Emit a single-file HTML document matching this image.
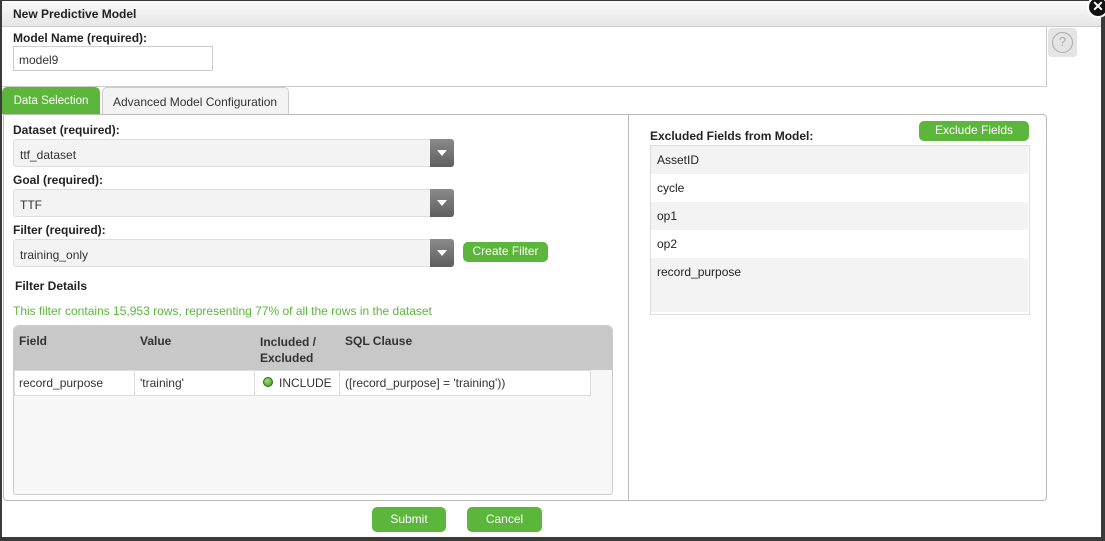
<!DOCTYPE html>
<html><head><style>
*{box-sizing:border-box;margin:0;padding:0}
body{width:1105px;height:541px;background:#3a3a3a;font-family:"Liberation Sans",sans-serif;font-size:12px;color:#333;position:relative;overflow:hidden}
.a{position:absolute;white-space:nowrap}
.lbl{font-weight:bold;font-size:12px;color:#222}
.sel{position:absolute;left:13px;width:441px;height:28px;background:#f3f3f3;border:1px solid #ddd;border-radius:3px;padding:8px 6px;font-size:12px;color:#333}
.sel .ar{position:absolute;right:-1px;top:-1px;width:24px;height:28px;background:linear-gradient(#8a8a8a,#5e5e5e);border-radius:0 3px 3px 0}
.sel .ar:after{content:"";position:absolute;left:7px;top:11px;border-left:5px solid transparent;border-right:5px solid transparent;border-top:6px solid #fff}
.btn{position:absolute;background:#5cb63c;color:#fff;border-radius:5px;text-align:center;font-size:12px;white-space:nowrap}
.li{position:absolute;left:651px;width:377px;height:28px;padding:7px 6px;font-size:12px;color:#222}
</style></head><body>
<div class="a" style="left:2px;top:1px;width:1099px;height:536px;background:#fff"></div>
<div class="a" style="left:2px;top:1px;width:1099px;height:26px;background:linear-gradient(#fafafa,#e6e6e6);border-bottom:1px solid #ccc"></div>
<div class="a lbl" style="left:13px;top:7px">New Predictive Model</div>
<div class="a" style="left:1087px;top:-4px;width:22px;height:22px;border-radius:50%;background:#111;border:2px solid #fff;color:#fff;font-weight:bold;font-size:14px;text-align:center;line-height:17px">✕</div>
<div class="a" style="left:2px;top:27px;width:1045px;height:60px;border:1px solid #ccc;border-left:none;border-top:none"></div>
<div class="a lbl" style="left:13px;top:31px">Model Name (required):</div>
<div class="a" style="left:13px;top:46px;width:200px;height:25px;border:1px solid #ccc;padding:6px 5px;font-size:12px">model9</div>
<div class="a" style="left:1048px;top:28px;width:29px;height:29px;background:#e4e4e4;border-radius:4px"></div>
<div class="a" style="left:1052px;top:32px;width:21px;height:21px;border:1.5px solid #aaa;border-radius:50%;color:#aaa;text-align:center;font-size:13px;line-height:18px">?</div>
<div class="a" style="left:2px;top:87px;width:98px;height:27px;background:#5cb63c;border-radius:5px 5px 0 0;color:#fff;padding:8px 0;text-align:center;font-size:11.5px">Data Selection</div>
<div class="a" style="left:102px;top:87px;width:187px;height:27px;background:#f3f3f3;border:1px solid #ccc;border-bottom:none;border-radius:5px 5px 0 0;padding:7px 10px;color:#333">Advanced Model Configuration</div>
<div class="a" style="left:3px;top:114px;width:1044px;height:387px;border:1px solid #bbb;border-radius:0 4px 4px 4px"></div>
<div class="a" style="left:628px;top:115px;width:1px;height:385px;background:#bbb"></div>
<div class="a lbl" style="left:13px;top:123px">Dataset (required):</div>
<div class="sel" style="top:139px">ttf_dataset<div class="ar"></div></div>
<div class="a lbl" style="left:13px;top:173px">Goal (required):</div>
<div class="sel" style="top:189px">TTF<div class="ar"></div></div>
<div class="a lbl" style="left:13px;top:223px">Filter (required):</div>
<div class="sel" style="top:239px">training_only<div class="ar"></div></div>
<div class="btn" style="left:463px;top:242px;width:85px;height:20px;line-height:19px">Create Filter</div>
<div class="a lbl" style="left:15px;top:279px">Filter Details</div>
<div class="a" style="left:13px;top:304px;color:#5cb63c;font-size:12px">This filter contains 15,953 rows, representing 77% of all the rows in the dataset</div>
<div class="a" style="left:13px;top:325px;width:600px;height:170px;background:#f7f7f7;border:1px solid #ccc;border-radius:6px 6px 3px 3px;overflow:hidden">
<div style="height:44px;background:#c8c8c8;position:relative;font-weight:bold;color:#333">
<span class="a" style="left:5px;top:8px">Field</span><span class="a" style="left:126px;top:8px">Value</span><span class="a" style="left:246px;top:8px;line-height:16px">Included /<br>Excluded</span><span class="a" style="left:331px;top:8px">SQL Clause</span></div>
<div class="a" style="left:0;top:44px;width:577px;height:26px;background:#fff;border:1px solid #ddd"></div>
<div class="a" style="left:120px;top:44px;width:1px;height:26px;background:#ddd"></div>
<div class="a" style="left:240px;top:44px;width:1px;height:26px;background:#ddd"></div>
<div class="a" style="left:325px;top:44px;width:1px;height:26px;background:#ddd"></div>
<span class="a" style="left:5px;top:50px">record_purpose</span><span class="a" style="left:126px;top:50px">'training'</span>
<span class="a" style="left:249px;top:51px;width:10px;height:10px;border-radius:50%;background:radial-gradient(circle at 40% 35%,#9ee07a,#3c8e1c);border:1px solid #2c6a14"></span>
<span class="a" style="left:265px;top:50px">INCLUDE</span><span class="a" style="left:331px;top:50px">([record_purpose] = 'training'))</span>
</div>
<div class="a lbl" style="left:650px;top:129px">Excluded Fields from Model:</div>
<div class="btn" style="left:919px;top:121px;width:110px;height:20px;line-height:19px">Exclude Fields</div>
<div class="a" style="left:650px;top:145px;width:380px;height:170px;border:1px solid #ddd"></div>
<div class="li" style="top:146px;background:#f3f3f3">AssetID</div>
<div class="li" style="top:174px">cycle</div>
<div class="li" style="top:202px;background:#f3f3f3">op1</div>
<div class="li" style="top:230px">op2</div>
<div class="li" style="top:258px;height:54px;background:#f3f3f3">record_purpose</div>
<div class="btn" style="left:372px;top:507px;width:74px;height:25px;line-height:25px">Submit</div>
<div class="btn" style="left:467px;top:507px;width:75px;height:25px;line-height:25px">Cancel</div>
</body></html>
